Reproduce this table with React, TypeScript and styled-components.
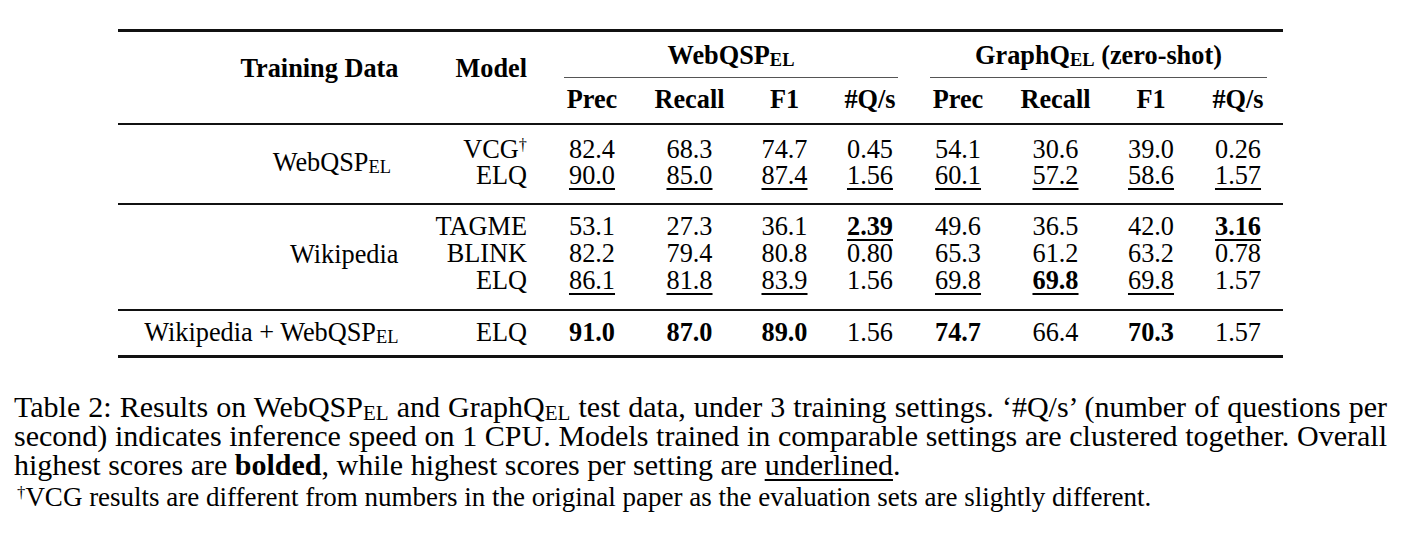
import React from "react";
import styled, { createGlobalStyle } from "styled-components";

const GlobalStyle = createGlobalStyle`
  html, body { margin: 0; padding: 0; background: #fff; }
  body {
    font-family: "Liberation Serif", "Times New Roman", Times, serif;
    color: #000;
  }
`;

const COLS = "299px 131px 88px 107px 83px 88px 88px 107px 84px 90px";

const Page = styled.div`
  width: 1418px;
  height: 550px;
  box-sizing: border-box;
  padding: 29px 0 0 14px;
`;

const Table = styled.div`
  margin-left: 104px;
  width: 1165px;
  font-size: 26.3px;
  line-height: 26px;
`;

const Rule = styled.div<{ $weight: number }>`
  height: ${(p) => p.$weight}px;
  background: #111;
`;

const HeaderGrid = styled.div`
  display: grid;
  grid-template-columns: ${COLS};
  font-weight: bold;
`;

const SpanHead = styled.div<{ $col: number; $pad: number }>`
  grid-column: ${(p) => p.$col};
  grid-row: 1 / span 2;
  align-self: start;
  text-align: right;
  padding: 24px ${(p) => p.$pad}px 0 0;
  white-space: nowrap;
`;

const GroupHead = styled.div<{ $col: number }>`
  grid-column: ${(p) => p.$col} / span 4;
  grid-row: 1;
  display: flex;
  flex-direction: column;
  padding-top: 11px;
`;

const GroupTitle = styled.div`
  text-align: center;
  padding-bottom: 8px;
  white-space: nowrap;
`;

const CMidRule = styled.div`
  height: 1px;
  margin: 0 16px;
  background: #555;
`;

const SubHead = styled.div<{ $col: number }>`
  grid-column: ${(p) => p.$col};
  grid-row: 2;
  text-align: center;
  padding: 9px 0 10px;
`;

const Group = styled.div<{ $rowH: number; $pt: number; $pb: number }>`
  display: grid;
  grid-template-columns: ${COLS};
  grid-auto-rows: ${(p) => p.$rowH}px;
  padding: ${(p) => p.$pt}px 0 ${(p) => p.$pb}px;
`;

const Setting = styled.div<{ $rows: number; $pad: number }>`
  grid-column: 1;
  grid-row: 1 / span ${(p) => p.$rows};
  align-self: center;
  text-align: right;
  padding-right: ${(p) => p.$pad}px;
  white-space: nowrap;
`;

const ModelCell = styled.div`
  grid-column: 2;
  text-align: right;
  padding-right: 21px;
  white-space: nowrap;
`;

const Num = styled.div<{ $b?: boolean; $u?: boolean }>`
  justify-self: center;
  font-weight: ${(p) => (p.$b ? "bold" : "normal")};
  text-decoration: ${(p) => (p.$u ? "underline" : "none")};
  text-decoration-thickness: 1.5px;
  text-underline-offset: 4px;
  white-space: nowrap;
`;

const Sub = styled.span`
  font-size: 0.7em;
  line-height: 0;
  vertical-align: -0.13em;
`;

const Sup = styled.span`
  font-size: 0.62em;
  line-height: 0;
  vertical-align: 0.5em;
`;

const Caption = styled.div`
  width: 1373px;
  margin-top: 34px;
`;

const CaptionLine = styled.div<{ $last?: boolean; $tight?: boolean }>`
  font-size: 30px;
  line-height: 29px;
  text-align: justify;
  text-align-last: ${(p) => (p.$last ? "left" : "justify")};
  word-spacing: ${(p) => (p.$tight ? "-0.5px" : "0")};
  white-space: nowrap;
`;

const Bold = styled.b`
  font-weight: bold;
`;

const Under = styled.span`
  text-decoration: underline;
  text-decoration-thickness: 1.5px;
  text-underline-offset: 4px;
`;

const Footnote = styled.div`
  font-size: 27px;
  line-height: 29px;
  margin-top: 4px;
  white-space: nowrap;
`;

const Dagger = styled.span`
  font-size: 0.62em;
  line-height: 0;
  vertical-align: 0.5em;
  padding-left: 3px;
`;

type Cell = { v: string; b?: boolean; u?: boolean };
type Row = { model: React.ReactNode; vals: Cell[] };
type GroupData = {
  setting: React.ReactNode;
  settingPad: number;
  rowH: number;
  pt: number;
  pb: number;
  rows: Row[];
};

const c = (v: string, flags = ""): Cell => ({
  v,
  b: flags.includes("b"),
  u: flags.includes("u"),
});

const EL = <Sub>EL</Sub>;

const groups: GroupData[] = [
  {
    setting: <>WebQSP{EL}</>,
    settingPad: 26,
    rowH: 26,
    pt: 12,
    pb: 14,
    rows: [
      {
        model: (
          <>
            VCG<Sup>†</Sup>
          </>
        ),
        vals: ["82.4", "68.3", "74.7", "0.45", "54.1", "30.6", "39.0", "0.26"].map((v) => c(v)),
      },
      {
        model: "ELQ",
        vals: ["90.0", "85.0", "87.4", "1.56", "60.1", "57.2", "58.6", "1.57"].map((v) => c(v, "u")),
      },
    ],
  },
  {
    setting: "Wikipedia",
    settingPad: 18.5,
    rowH: 27,
    pt: 9,
    pb: 14,
    rows: [
      {
        model: "TAGME",
        vals: [c("53.1"), c("27.3"), c("36.1"), c("2.39", "bu"), c("49.6"), c("36.5"), c("42.0"), c("3.16", "bu")],
      },
      {
        model: "BLINK",
        vals: ["82.2", "79.4", "80.8", "0.80", "65.3", "61.2", "63.2", "0.78"].map((v) => c(v)),
      },
      {
        model: "ELQ",
        vals: [c("86.1", "u"), c("81.8", "u"), c("83.9", "u"), c("1.56"), c("69.8", "u"), c("69.8", "bu"), c("69.8", "u"), c("1.57")],
      },
    ],
  },
  {
    setting: <>Wikipedia + WebQSP{EL}</>,
    settingPad: 18.5,
    rowH: 26,
    pt: 9,
    pb: 9,
    rows: [
      {
        model: "ELQ",
        vals: [c("91.0", "b"), c("87.0", "b"), c("89.0", "b"), c("1.56"), c("74.7", "b"), c("66.4"), c("70.3", "b"), c("1.57")],
      },
    ],
  },
];

const metrics = ["Prec", "Recall", "F1", "#Q/s"];

export default function App() {
  return (
    <>
      <GlobalStyle />
      <Page>
        <Table>
          <Rule $weight={3} />
          <HeaderGrid>
            <SpanHead $col={1} $pad={18.5}>Training Data</SpanHead>
            <SpanHead $col={2} $pad={21}>Model</SpanHead>
            <GroupHead $col={3}>
              <GroupTitle>WebQSP{EL}</GroupTitle>
              <CMidRule />
            </GroupHead>
            <GroupHead $col={7}>
              <GroupTitle>GraphQ{EL} (zero-shot)</GroupTitle>
              <CMidRule />
            </GroupHead>
            {[...metrics, ...metrics].map((m, i) => (
              <SubHead key={i} $col={i + 3}>
                {m}
              </SubHead>
            ))}
          </HeaderGrid>
          <Rule $weight={2} />
          {groups.map((g, gi) => (
            <React.Fragment key={gi}>
              <Group $rowH={g.rowH} $pt={g.pt} $pb={g.pb}>
                <Setting $rows={g.rows.length} $pad={g.settingPad}>
                  {g.setting}
                </Setting>
                {g.rows.map((r, ri) => (
                  <React.Fragment key={ri}>
                    <ModelCell>{r.model}</ModelCell>
                    {r.vals.map((v, vi) => (
                      <Num key={vi} $b={v.b} $u={v.u}>
                        {v.v}
                      </Num>
                    ))}
                  </React.Fragment>
                ))}
              </Group>
              <Rule $weight={gi === groups.length - 1 ? 3 : 2} />
            </React.Fragment>
          ))}
        </Table>
        <Caption>
          <CaptionLine $tight>
            Table 2: Results on WebQSP{EL} and GraphQ{EL} test data, under 3 training settings. ‘#Q/s’ (number of questions per
          </CaptionLine>
          <CaptionLine>
            second) indicates inference speed on 1 CPU. Models trained in comparable settings are clustered together. Overall
          </CaptionLine>
          <CaptionLine $last>
            highest scores are <Bold>bolded</Bold>, while highest scores per setting are <Under>underlined</Under>.
          </CaptionLine>
          <Footnote>
            <Dagger>†</Dagger>VCG results are different from numbers in the original paper as the evaluation sets are slightly different.
          </Footnote>
        </Caption>
      </Page>
    </>
  );
}
